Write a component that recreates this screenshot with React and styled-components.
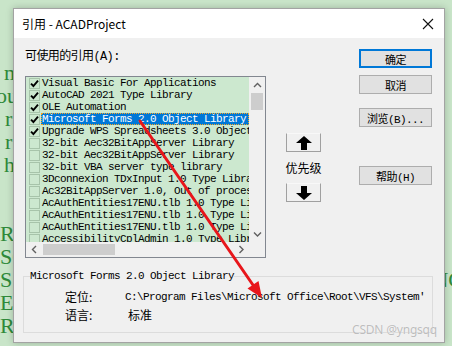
import React from 'react';
import styled, { createGlobalStyle } from 'styled-components';

const MONO = `"Liberation Mono", "Noto Sans CJK SC", monospace`;

const Global = createGlobalStyle`
  html, body { margin: 0; padding: 0; }
  body { width: 452px; height: 346px; overflow: hidden; background: #c9e5c9; }
  * { box-sizing: border-box; }
`;

const Desktop = styled.div`
  position: relative;
  width: 452px;
  height: 346px;
  overflow: hidden;
  background: #c9e5c9;
`;

const Backdrop = styled.div`
  padding-top: 61px;
  font-family: "Liberation Serif", serif;
  font-size: 22px;
  line-height: 23px;
  color: #2f8a3a;
`;

const BackLine = styled.div`
  display: flex;
  justify-content: space-between;
  height: 23px;
  white-space: nowrap;
`;

const BackWord = styled.span`
  margin-left: ${p => p.$l || 0}px;
  margin-right: ${p => p.$r || 0}px;
`;

const Window = styled.div`
  position: absolute;
  left: 13px;
  top: 8px;
  width: 432px;
  height: 335px;
  border: 1px solid #a3a3a3;
  box-shadow: 0 0 7px rgba(0, 0, 0, 0.22);
  display: flex;
  flex-direction: column;
  background: #f0f0f0;
`;

const TitleBar = styled.div`
  height: 29px;
  flex: none;
  background: #fff;
  display: flex;
  align-items: center;
  justify-content: space-between;
  padding: 0 10px 0 8px;
  font-family: "Noto Sans CJK SC", "Noto Sans", sans-serif;
  font-size: 12px;
  color: #000;
`;

const Body = styled.div`
  flex: 1;
  padding: 10px 12px 0 11px;
  font-family: ${MONO};
  font-size: 11px;
  letter-spacing: -0.6px;
  color: #000;
`;

const TopRow = styled.div`
  display: flex;
  align-items: flex-start;
`;

const LeftCol = styled.div`
  width: 241px;
  flex: none;
`;

const Label = styled.div`
  height: 18px;
  line-height: 18px;
  margin-bottom: 10px;
  font-size: 12px;
  letter-spacing: -0.6px;
`;

const ListBox = styled.div`
  width: 241px;
  height: 182px;
  border: 1px solid #828790;
  display: grid;
  grid-template-columns: 1fr 16px;
  grid-template-rows: 1fr 15px;
  background: #cce8cf;
`;

const Viewport = styled.div`
  overflow: hidden;
`;

const Row = styled.div`
  display: flex;
  align-items: center;
  height: 12px;
  white-space: nowrap;
`;

const Check = styled.span`
  width: 11px;
  height: 11px;
  flex: none;
  margin: 0 1px 0 3px;
  border: 1px solid #a7c4aa;
  display: flex;
  align-items: center;
  justify-content: center;
`;

const ItemText = styled.span`
  height: 12px;
  line-height: 12px;
  padding-left: 1px;
  font-family: ${MONO};
  font-size: 11px;
  letter-spacing: -0.6px;
  color: ${p => (p.$sel ? '#fff' : '#000')};
  ${p => p.$sel && `
    flex: 1;
    background: #0078d7;
    outline: 1px dotted #f5a623;
    outline-offset: -1px;
  `}
`;

const VScroll = styled.div`
  background: #f0f0f0;
  display: flex;
  flex-direction: column;
`;

const HScroll = styled.div`
  background: #f0f0f0;
  display: flex;
  align-items: stretch;
`;

const ArrowCell = styled.div`
  flex: none;
  width: ${p => (p.$h ? '16px' : 'auto')};
  height: ${p => (p.$h ? 'auto' : '16px')};
  display: flex;
  align-items: center;
  justify-content: center;
`;

const Track = styled.div`
  flex: 1;
  display: flex;
  flex-direction: ${p => (p.$h ? 'row' : 'column')};
`;

const Thumb = styled.div`
  background: #cdcdcd;
  ${p => (p.$h
    ? 'width: 72px; margin: 2px 0 2px 1px;'
    : 'height: 17px; margin: 0 2px;')}
`;

const Corner = styled.div`
  background: #f0f0f0;
`;

const MidCol = styled.div`
  width: 35px;
  flex: none;
  margin-left: 20px;
  padding-top: 85px;
  display: flex;
  flex-direction: column;
  align-items: center;
`;

const PrioBtn = styled.div`
  width: 35px;
  height: 19px;
  background: #f0f0f0;
  border: 1px solid;
  border-color: #f8f8f8 #a0a0a0 #a0a0a0 #a0a0a0;
  display: flex;
  align-items: center;
  justify-content: center;
`;

const PrioLabel = styled.div`
  height: 18px;
  line-height: 18px;
  margin: 7px 0 6px;
  font-family: "Noto Sans CJK SC", sans-serif;
  font-size: 12px;
  letter-spacing: 0;
  white-space: nowrap;
`;

const RightCol = styled.div`
  width: 73px;
  flex: none;
  margin-left: 38px;
  padding-top: 1px;
  display: flex;
  flex-direction: column;
`;

const Button = styled.div`
  height: 19px;
  margin-top: ${p => p.$mt || 0}px;
  background: #e1e1e1;
  border: 1px solid ${p => (p.$focus ? '#0078d7' : '#adadad')};
  box-shadow: ${p => (p.$focus ? 'inset 0 0 0 1px #0078d7' : 'none')};
  display: flex;
  align-items: center;
  justify-content: center;
  font-size: 11px;
  letter-spacing: -0.6px;
  white-space: nowrap;
`;

const Group = styled.fieldset`
  margin: 12px -1px 0 -2px;
  border: 1px solid #dcdcdc;
  padding: 6px 0 8px 6px;
  min-width: 0;
`;

const Legend = styled.legend`
  padding: 0;
  height: 12px;
  line-height: 12px;
  font-family: ${MONO};
  font-size: 11px;
  letter-spacing: -0.6px;
`;

const InfoRow = styled.div`
  display: grid;
  grid-template-columns: 60px 1fr;
  margin-left: 35px;
  height: 18px;
  line-height: 18px;
  white-space: nowrap;
`;

const InfoKey = styled.span`
  font-family: "Noto Sans CJK SC", sans-serif;
  font-size: 12px;
  letter-spacing: 0;
`;

const InfoVal = styled.span`
  padding-left: ${p => p.$pad || 0}px;
  font-family: ${p => (p.$cjk ? '"Noto Sans CJK SC", sans-serif' : MONO)};
  font-size: ${p => (p.$cjk ? '12px' : '11px')};
  letter-spacing: ${p => (p.$cjk ? '0' : '-0.6px')};
`;

const Watermark = styled.div`
  position: absolute;
  right: 15px;
  bottom: 8px;
  font-family: "Noto Sans", sans-serif;
  font-size: 12px;
  color: #bdbdbd;
  text-shadow: 0 0 1px #fff;
  letter-spacing: -0.2px;
`;

const Overlay = styled.svg`
  position: absolute;
  left: 0;
  top: 0;
  pointer-events: none;
`;

const CheckMark = () => (
  <svg width="9" height="9" viewBox="0 0 9 9">
    <path d="M1 4.6 L3.4 7 L8 1.6" fill="none" stroke="#000" strokeWidth="1.9" />
  </svg>
);

const Chevron = ({ dir }) => {
  const d = {
    up: 'M1 5 L4.5 1.5 L8 5',
    down: 'M1 1.5 L4.5 5 L8 1.5',
    left: 'M5 1 L1.5 4.5 L5 8',
    right: 'M1.5 1 L5 4.5 L1.5 8',
  }[dir];
  const horiz = dir === 'left' || dir === 'right';
  return (
    <svg width={horiz ? 7 : 9} height={horiz ? 9 : 7} viewBox={horiz ? '0 0 7 9' : '0 0 9 7'}>
      <path d={d} fill="none" stroke="#606060" strokeWidth="1.4" />
    </svg>
  );
};

const BigArrow = ({ down }) => (
  <svg width="16" height="14" viewBox="0 0 16 14" style={down ? { transform: 'rotate(180deg)' } : undefined}>
    <polygon points="8,0 16,7 11,7 11,14 5,14 5,7 0,7" fill="#000" />
  </svg>
);

const items = [
  ['Visual Basic For Applications', true],
  ['AutoCAD 2021 Type Library', true],
  ['OLE Automation', true],
  ['Microsoft Forms 2.0 Object Library', true, true],
  ['Upgrade WPS Spreadsheets 3.0 Object Library', true],
  ['32-bit Aec32BitAppServer Library', false],
  ['32-bit Aec32BitAppServer Library', false],
  ['32-bit VBA server type library', false],
  ['3Dconnexion TDxInput 1.0 Type Library', false],
  ['Ac32BitAppServer 1.0, Out of process server', false],
  ['AcAuthEntities17ENU.tlb 1.0 Type Library', false],
  ['AcAuthEntities17ENU.tlb 1.0 Type Library', false],
  ['AcAuthEntities17ENU.tlb 1.0 Type Library', false],
  ['AccessibilityCplAdmin 1.0 Type Library', false],
];

const backLines = [
  ['m', 4], ['ou', -4], ['r', 5], ['r', 5], ['h', 4], ['', 0], ['', 0],
  ['RO', 0], ['SC', 0], ['SS', 0, 'NC'], ['E', 0], ['RE', 0],
];

export default function App() {
  return (
    <Desktop>
      <Global />
      <Backdrop>
        {backLines.map(([w, l, r], i) => (
          <BackLine key={i}>
            <BackWord $l={l}>{w}</BackWord>
            {r && <BackWord $r={-11}>{r}</BackWord>}
          </BackLine>
        ))}
      </Backdrop>

      <Window>
        <TitleBar>
          <span>引用 - ACADProject</span>
          <svg width="12" height="12" viewBox="0 0 12 12">
            <path d="M1 1 L11 11 M11 1 L1 11" stroke="#111" strokeWidth="1.1" />
          </svg>
        </TitleBar>
        <Body>
          <TopRow>
            <LeftCol>
              <Label>可使用的引用(A):</Label>
              <ListBox>
                <Viewport>
                  {items.map(([t, c, s], i) => (
                    <Row key={i}>
                      <Check>{c && <CheckMark />}</Check>
                      <ItemText $sel={s}>{t}</ItemText>
                    </Row>
                  ))}
                </Viewport>
                <VScroll>
                  <ArrowCell><Chevron dir="up" /></ArrowCell>
                  <Track><Thumb /></Track>
                  <ArrowCell><Chevron dir="down" /></ArrowCell>
                </VScroll>
                <HScroll>
                  <ArrowCell $h><Chevron dir="left" /></ArrowCell>
                  <Track $h><Thumb $h /></Track>
                  <ArrowCell $h><Chevron dir="right" /></ArrowCell>
                </HScroll>
                <Corner />
              </ListBox>
            </LeftCol>
            <MidCol>
              <PrioBtn><BigArrow /></PrioBtn>
              <PrioLabel>优先级</PrioLabel>
              <PrioBtn><BigArrow down /></PrioBtn>
            </MidCol>
            <RightCol>
              <Button $focus>确定</Button>
              <Button $mt={7}>取消</Button>
              <Button $mt={14}>浏览(B)...</Button>
              <Button $mt={39}>帮助(H)</Button>
            </RightCol>
          </TopRow>
          <Group>
            <Legend>Microsoft Forms 2.0 Object Library</Legend>
            <InfoRow>
              <InfoKey>定位:</InfoKey>
              <InfoVal>C:\Program Files\Microsoft Office\Root\VFS\System'</InfoVal>
            </InfoRow>
            <InfoRow>
              <InfoKey>语言:</InfoKey>
              <InfoVal $cjk $pad={3}>标准</InfoVal>
            </InfoRow>
          </Group>
        </Body>
      </Window>

      <Watermark>CSDN @yngsqq</Watermark>

      <Overlay width="452" height="346" viewBox="0 0 452 346">
        <line x1="140" y1="121" x2="253" y2="285" stroke="#e8161b" strokeWidth="3" strokeLinecap="round" />
        <polygon points="262,298 247.5,288.5 258.5,281" fill="#e8161b" />
      </Overlay>
    </Desktop>
  );
}
